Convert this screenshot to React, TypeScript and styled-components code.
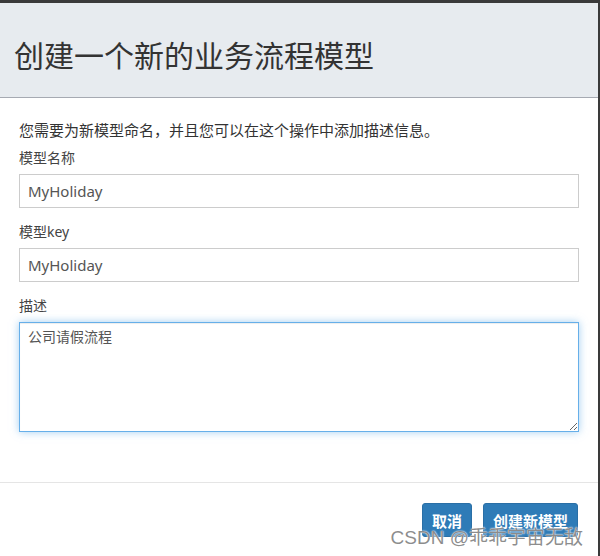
import React from "react";
import styled, { createGlobalStyle } from "styled-components";

const Global = createGlobalStyle`
  html, body { margin: 0; padding: 0; background: #fff; }
  * { box-sizing: border-box; }
`;

const FONT = `"Noto Sans", "Noto Sans CJK SC", sans-serif`;

const Modal = styled.div`
  position: relative;
  width: 600px;
  height: 556px;
  overflow: hidden;
  background: #fff;
  border-top: 3px solid #3a3a3a;
  border-right: 2px solid #3a3a3a;
  font-family: ${FONT};
  color: #333;
`;

const Header = styled.div`
  height: 95px;
  display: flex;
  align-items: center;
  padding: 12px 14px 0;
  background: #e7ebef;
  border-bottom: 1px solid #a6aab2;
`;

const Title = styled.h1`
  margin: 0;
  font-size: 30px;
  font-weight: 400;
  line-height: 40px;
  color: #333;
`;

const Body = styled.div`
  padding: 22px 19px 36px;
`;

const Intro = styled.p`
  margin: 0 0 8px;
  font-size: 15px;
  line-height: 20px;
  color: #333;
`;

const Group = styled.div`
  display: flex;
  flex-direction: column;
  gap: 6px;
  margin-bottom: 14px;
`;

const Label = styled.label`
  display: block;
  height: 20px;
  font-size: 14px;
  line-height: 20px;
  color: #444;
`;

const Input = styled.input`
  display: block;
  width: 100%;
  height: 34px;
  margin: 0;
  padding: 0 8px;
  border: 1px solid #cccccc;
  border-radius: 0;
  font-family: ${FONT};
  font-size: 15px;
  color: #555;
  background: #fff;
  outline: none;
`;

const TextArea = styled.textarea`
  display: block;
  width: 100%;
  height: 110px;
  margin: 0;
  padding: 4px 8px;
  border: 1px solid #66afe9;
  border-radius: 0;
  font-family: ${FONT};
  font-size: 14px;
  line-height: 20px;
  color: #555;
  outline: none;
  resize: both;
  box-shadow: inset 0 1px 1px rgba(0, 0, 0, 0.075), 0 0 8px rgba(102, 175, 233, 0.6);
`;

const Footer = styled.div`
  display: flex;
  justify-content: flex-end;
  gap: 11px;
  padding: 20px 20px 0;
  border-top: 1px solid #e5e5e5;
`;

const Button = styled.button`
  height: 34px;
  padding: 0 9px;
  border: 1px solid #2a6fa6;
  border-radius: 3px;
  background: #2e7bb7;
  color: #fff;
  font-family: ${FONT};
  font-size: 15px;
  font-weight: 700;
`;

const Watermark = styled.div`
  position: absolute;
  right: 15px;
  bottom: 6px;
  font-family: "Liberation Sans", "Noto Sans CJK SC", sans-serif;
  font-size: 19px;
  line-height: 24px;
  color: rgba(120, 120, 120, 0.85);
  text-shadow: 0 0 2px #fff, 0 0 1px #fff;
  pointer-events: none;
  white-space: nowrap;
`;

export default function App() {
  return (
    <>
      <Global />
      <Modal>
        <Header>
          <Title>创建一个新的业务流程模型</Title>
        </Header>
        <Body>
          <Intro>您需要为新模型命名，并且您可以在这个操作中添加描述信息。</Intro>
          <Group>
            <Label>模型名称</Label>
            <Input defaultValue="MyHoliday" />
          </Group>
          <Group>
            <Label>模型key</Label>
            <Input defaultValue="MyHoliday" />
          </Group>
          <Group>
            <Label>描述</Label>
            <TextArea defaultValue="公司请假流程" />
          </Group>
        </Body>
        <Footer>
          <Button>取消</Button>
          <Button>创建新模型</Button>
        </Footer>
        <Watermark>CSDN @乖乖宇宙无敌</Watermark>
      </Modal>
    </>
  );
}
